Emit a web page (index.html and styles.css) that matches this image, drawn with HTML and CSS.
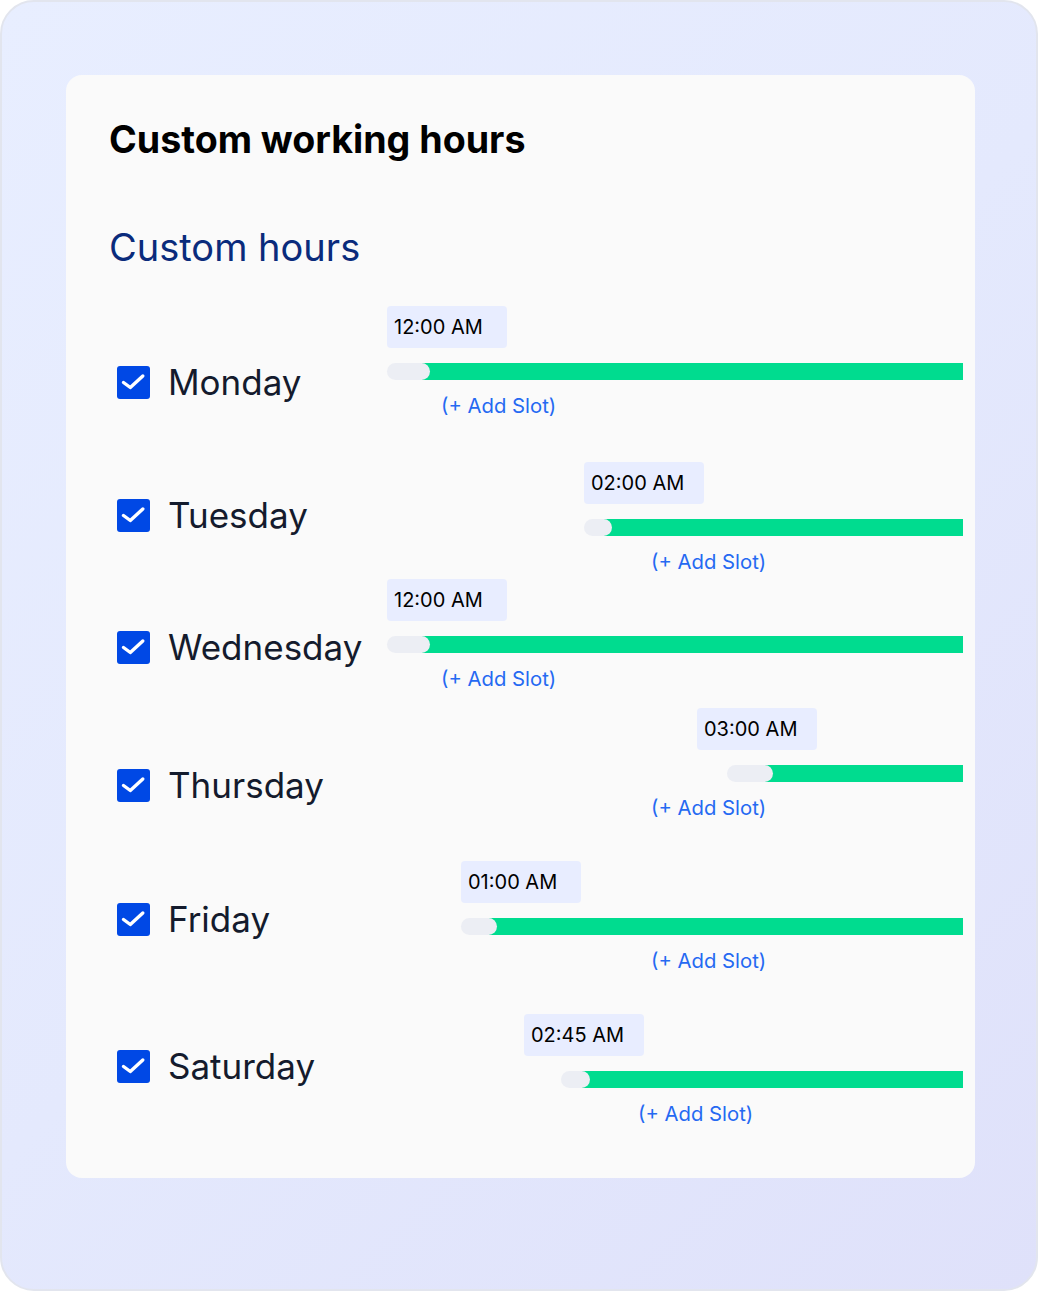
FILE: index.html
```html
<!DOCTYPE html>
<html lang="en">
<head>
<meta charset="utf-8">
<title>Custom working hours</title>
<link rel="stylesheet" href="styles.css">
</head>
<body>
<div class="frame">
  <div class="card">
    <h1 class="title">Custom working hours</h1>
    <h2 class="subtitle">Custom hours</h2>

    <div class="row" style="--cy:76px; --gap:44px; --start:0px; --pill:43px; --box:0px; --add:54px;">
      <label class="day"><span class="check"><svg viewBox="0 0 33 33"><path d="M6.5 16.5l6.8 5 12.5-11.5"/></svg></span><span class="dayname">Monday</span></label>
      <div class="slot">
        <div class="time">12:00 AM</div>
        <div class="track"><span class="pill"></span><span class="fill"></span></div>
        <a class="add">(+ Add Slot)</a>
      </div>
    </div>

    <div class="row" style="--cy:53px; --gap:5px; --start:197px; --pill:28px; --box:197px; --add:264px;">
      <label class="day"><span class="check"><svg viewBox="0 0 33 33"><path d="M6.5 16.5l6.8 5 12.5-11.5"/></svg></span><span class="dayname">Tuesday</span></label>
      <div class="slot">
        <div class="time">02:00 AM</div>
        <div class="track"><span class="pill"></span><span class="fill"></span></div>
        <a class="add">(+ Add Slot)</a>
      </div>
    </div>

    <div class="row" style="--cy:68px; --gap:17px; --start:0px; --pill:43px; --box:0px; --add:54px;">
      <label class="day"><span class="check"><svg viewBox="0 0 33 33"><path d="M6.5 16.5l6.8 5 12.5-11.5"/></svg></span><span class="dayname">Wednesday</span></label>
      <div class="slot">
        <div class="time">12:00 AM</div>
        <div class="track"><span class="pill"></span><span class="fill"></span></div>
        <a class="add">(+ Add Slot)</a>
      </div>
    </div>

    <div class="row" style="--cy:77px; --gap:41px; --start:340px; --pill:46px; --box:310px; --add:264px;">
      <label class="day"><span class="check"><svg viewBox="0 0 33 33"><path d="M6.5 16.5l6.8 5 12.5-11.5"/></svg></span><span class="dayname">Thursday</span></label>
      <div class="slot">
        <div class="time">03:00 AM</div>
        <div class="track"><span class="pill"></span><span class="fill"></span></div>
        <a class="add">(+ Add Slot)</a>
      </div>
    </div>

    <div class="row" style="--cy:58px; --gap:41px; --start:74px; --pill:36px; --box:74px; --add:264px;">
      <label class="day"><span class="check"><svg viewBox="0 0 33 33"><path d="M6.5 16.5l6.8 5 12.5-11.5"/></svg></span><span class="dayname">Friday</span></label>
      <div class="slot">
        <div class="time">01:00 AM</div>
        <div class="track"><span class="pill"></span><span class="fill"></span></div>
        <a class="add">(+ Add Slot)</a>
      </div>
    </div>

    <div class="row" style="--cy:52px; --gap:0px; --start:174px; --pill:29px; --box:137px; --add:251px;">
      <label class="day"><span class="check"><svg viewBox="0 0 33 33"><path d="M6.5 16.5l6.8 5 12.5-11.5"/></svg></span><span class="dayname">Saturday</span></label>
      <div class="slot">
        <div class="time">02:45 AM</div>
        <div class="track"><span class="pill"></span><span class="fill"></span></div>
        <a class="add">(+ Add Slot)</a>
      </div>
    </div>
  </div>
</div>
</body>
</html>
```

FILE: styles.css
```css
* { box-sizing: border-box; }

html, body {
  margin: 0;
  padding: 0;
  background: #ffffff;
}

body {
  font-family: Inter, "Noto Sans", "DejaVu Sans", sans-serif;
}

.frame {
  width: 1038px;
  height: 1291px;
  border: 2px solid #e2e5ee;
  border-radius: 34px;
  background: linear-gradient(135deg, #e8eeff 0%, #e4e9fd 50%, #dfe1fa 100%);
  padding: 73px 61px 0 64px;
}

.card {
  width: 909px;
  height: 1103px;
  background: #fafafa;
  border-radius: 16px;
  padding: 43px 12px 0 43px;
}

.title {
  margin: 0;
  font-size: 37.6px;
  line-height: 44px;
  font-weight: 700;
  color: #000000;
}

.subtitle {
  margin: 63px 0 37px 0;
  font-size: 38px;
  line-height: 44px;
  font-weight: 400;
  color: #0a2b7c;
}

.row {
  display: grid;
  grid-template-columns: 278px 576px;
  align-items: start;
  margin-bottom: var(--gap);
}

.day {
  display: flex;
  align-items: center;
  height: 44px;
  margin-top: calc(var(--cy) - 22px);
  padding-left: 8px;
}

.check {
  width: 33px;
  height: 33px;
  border-radius: 3px;
  background: #0048e5;
  display: block;
  flex: none;
}

.check svg {
  display: block;
  width: 33px;
  height: 33px;
  fill: none;
  stroke: #ffffff;
  stroke-width: 3.4;
  stroke-linecap: round;
  stroke-linejoin: round;
}

.dayname {
  margin-left: 18px;
  font-size: 35px;
  line-height: 44px;
  color: #141b2d;
}

.slot {
  display: flex;
  flex-direction: column;
  align-items: flex-start;
}

.time {
  margin-left: var(--box);
  width: 120px;
  height: 42px;
  background: #e8edff;
  border-radius: 4px;
  padding-left: 7px;
  font-size: 20px;
  line-height: 42px;
  color: #000000;
}

.track {
  margin-top: 15px;
  margin-left: var(--start);
  width: calc(100% - var(--start));
  height: 17px;
  display: flex;
  position: relative;
}

.pill {
  width: var(--pill);
  height: 17px;
  border-radius: 9px;
  background: #eceef4;
  flex: none;
  position: relative;
  z-index: 1;
}

.fill {
  flex: 1;
  height: 17px;
  margin-left: -8px;
  background: #00dc8f;
}

.add {
  margin-top: 14px;
  margin-left: var(--add);
  font-size: 20.3px;
  line-height: 24px;
  color: #2569f2;
  cursor: pointer;
}
```
